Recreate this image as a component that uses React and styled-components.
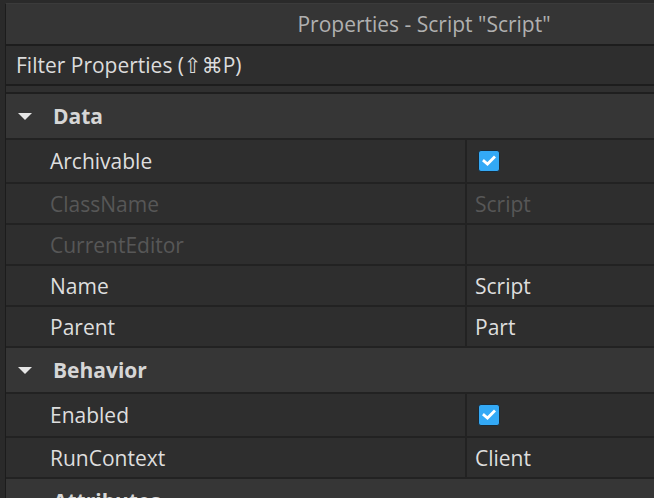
import React from "react";
import styled, { createGlobalStyle } from "styled-components";

const Global = createGlobalStyle`
  html, body { margin: 0; padding: 0; background: #2a2a2a; overflow: hidden; }
  body { font-family: "Open Sans", "Noto Sans", "DejaVu Sans", sans-serif; }
`;

const Window = styled.div`
  width: 654px;
  height: 498px;
  overflow: hidden;
  padding: 3px 0 0 5px;
  box-sizing: border-box;
  background: #2a2a2a;
`;

const Panel = styled.div`
  width: 836px;
  border-left: 1px solid #1c1c1c;
  border-top: 1px solid #3b3b3b;
  background: #2e2e2e;
`;

const TitleBar = styled.div`
  height: 40px;
  display: flex;
  align-items: center;
  justify-content: center;
  background: #353535;
  color: #b0b0b0;
  font-size: 21px;
  border-bottom: 2px solid #1d1d1d;
`;

const FilterBar = styled.div`
  height: 38px;
  display: flex;
  align-items: center;
  padding-left: 10px;
  background: #2e2e2e;
  color: #dcdcdc;
  font-size: 21px;
  border-bottom: 2px solid #1d1d1d;
`;

const Spacer = styled.div`
  height: 6px;
  background: #303030;
  border-bottom: 2px solid #1f1f1f;
`;

const SectionHeader = styled.div`
  height: 44px;
  display: flex;
  align-items: center;
  background: #363636;
  border-bottom: 2px solid #222222;
  color: #d6d6d6;
  font-weight: 700;
  font-size: 21px;
`;

const Caret = styled.svg`
  width: 14px;
  height: 7px;
  margin: 0 21px 0 12px;
  flex: none;
`;

const Row = styled.div`
  height: ${(p) => (p.$tall ? 42 : 39)}px;
  display: grid;
  grid-template-columns: 459px 2px 1fr;
  border-bottom: 2px solid #222222;
  background: #2e2e2e;
  font-size: 21px;
  color: ${(p) => (p.$disabled ? "#575757" : "#dedede")};
`;

const LabelCell = styled.div`
  display: flex;
  align-items: center;
  padding-left: 44px;
  white-space: nowrap;
`;

const Divider = styled.div`
  background: #222222;
`;

const ValueCell = styled.div`
  display: flex;
  align-items: center;
  padding-left: 8px;
  white-space: nowrap;
`;

const Check = styled.div`
  width: 22px;
  height: 22px;
  margin-left: 3px;
  box-sizing: border-box;
  border-radius: 3px;
  background: #33a9f6;
  border: 1px solid #1b2a36;
  display: flex;
  align-items: center;
  justify-content: center;
`;

function Checkbox() {
  return (
    <Check>
      <svg width="14" height="12" viewBox="0 0 14 12">
        <path d="M2 6 L5.5 9 L12 2.5" stroke="#ffffff" strokeWidth="2.8" fill="none" strokeLinecap="square" />
      </svg>
    </Check>
  );
}

function Section({ title }) {
  return (
    <SectionHeader>
      <Caret viewBox="0 0 14 7">
        <polygon points="0,0 14,0 7,7" fill="#e6e6e6" />
      </Caret>
      {title}
    </SectionHeader>
  );
}

function Prop({ label, value, checked, disabled }) {
  return (
    <Row $tall={checked} $disabled={disabled}>
      <LabelCell>{label}</LabelCell>
      <Divider />
      <ValueCell>{checked ? <Checkbox /> : value}</ValueCell>
    </Row>
  );
}

export default function App() {
  return (
    <Window>
      <Global />
      <Panel>
        <TitleBar>Properties - Script "Script"</TitleBar>
        <FilterBar>Filter Properties (⇧⌘P)</FilterBar>
        <Spacer />
        <Section title="Data" />
        <Prop label="Archivable" checked />
        <Prop label="ClassName" value="Script" disabled />
        <Prop label="CurrentEditor" value="" disabled />
        <Prop label="Name" value="Script" />
        <Prop label="Parent" value="Part" />
        <Section title="Behavior" />
        <Prop label="Enabled" checked />
        <Prop label="RunContext" value="Client" />
        <Section title="Attributes" />
      </Panel>
    </Window>
  );
}
